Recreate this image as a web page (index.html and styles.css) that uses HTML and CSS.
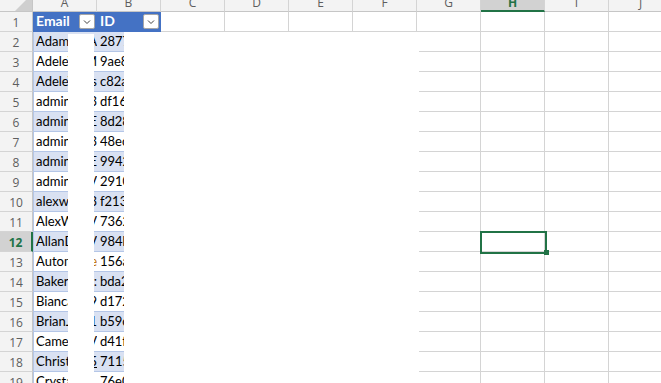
FILE: index.html
```html
<!DOCTYPE html>
<html>
<head>
<meta charset="utf-8">
<link rel="stylesheet" href="styles.css">
</head>
<body>
<div class="sheet">
  <div class="corner"><svg width="32" height="11" viewBox="0 0 32 11"><polygon points="15,11 32,11 32,-6" fill="#CFCFCF"/></svg></div>
  <div class="colhead"><span>A</span></div>
  <div class="colhead"><span>B</span></div>
  <div class="colhead"><span>C</span></div>
  <div class="colhead"><span>D</span></div>
  <div class="colhead"><span>E</span></div>
  <div class="colhead"><span>F</span></div>
  <div class="colhead"><span>G</span></div>
  <div class="colhead sel"><span>H</span></div>
  <div class="colhead"><span>I</span></div>
  <div class="colhead"><span>J</span></div>

  <div class="rowhead">1</div>
  <div class="cell th"><span class="thtext">Email</span><span class="dd"><svg width="14" height="13" viewBox="0 0 14 13"><path d="M4 5.5 L7 8.5 L10 5.5" fill="none" stroke="#404040" stroke-width="1"/></svg></span></div>
  <div class="cell th"><span class="thtext">ID</span><span class="dd"><svg width="14" height="13" viewBox="0 0 14 13"><path d="M4 5.5 L7 8.5 L10 5.5" fill="none" stroke="#404040" stroke-width="1"/></svg></span></div>
  <div class="cell"></div><div class="cell"></div><div class="cell"></div><div class="cell"></div><div class="cell"></div><div class="cell"></div><div class="cell"></div><div class="cell"></div>

  <div class="rowhead">2</div>
  <div class="cell td ca band"><span class="tx">AdamsWilson</span><span class="frag"><span>A</span></span></div>
  <div class="cell td band"><span class="tx">2877c1e4</span></div>
  <div class="cell"></div><div class="cell"></div><div class="cell"></div><div class="cell"></div><div class="cell"></div><div class="cell"></div><div class="cell"></div><div class="cell"></div>

  <div class="rowhead">3</div>
  <div class="cell td ca"><span class="tx">AdeleV</span><span class="frag"><span>M</span></span></div>
  <div class="cell td"><span class="tx">9ae83b10</span></div>
  <div class="cell"></div><div class="cell"></div><div class="cell"></div><div class="cell"></div><div class="cell"></div><div class="cell"></div><div class="cell"></div><div class="cell"></div>

  <div class="rowhead">4</div>
  <div class="cell td ca band"><span class="tx">AdeleVance</span><span class="frag"><span>s</span></span></div>
  <div class="cell td band"><span class="tx">c82a5f09</span></div>
  <div class="cell"></div><div class="cell"></div><div class="cell"></div><div class="cell"></div><div class="cell"></div><div class="cell"></div><div class="cell"></div><div class="cell"></div>

  <div class="rowhead">5</div>
  <div class="cell td ca"><span class="tx">admin</span><span class="frag"><span>3</span></span></div>
  <div class="cell td"><span class="tx">df16a2c7</span></div>
  <div class="cell"></div><div class="cell"></div><div class="cell"></div><div class="cell"></div><div class="cell"></div><div class="cell"></div><div class="cell"></div><div class="cell"></div>

  <div class="rowhead">6</div>
  <div class="cell td ca band"><span class="tx">admin</span><span class="frag"><span>E</span></span></div>
  <div class="cell td band"><span class="tx">8d28e4f1</span></div>
  <div class="cell"></div><div class="cell"></div><div class="cell"></div><div class="cell"></div><div class="cell"></div><div class="cell"></div><div class="cell"></div><div class="cell"></div>

  <div class="rowhead">7</div>
  <div class="cell td ca"><span class="tx">admin</span><span class="frag"><span>3</span></span></div>
  <div class="cell td"><span class="tx">48ec07b2</span></div>
  <div class="cell"></div><div class="cell"></div><div class="cell"></div><div class="cell"></div><div class="cell"></div><div class="cell"></div><div class="cell"></div><div class="cell"></div>

  <div class="rowhead">8</div>
  <div class="cell td ca band"><span class="tx">admin</span><span class="frag"><span>E</span></span></div>
  <div class="cell td band"><span class="tx">99421d6a</span></div>
  <div class="cell"></div><div class="cell"></div><div class="cell"></div><div class="cell"></div><div class="cell"></div><div class="cell"></div><div class="cell"></div><div class="cell"></div>

  <div class="rowhead">9</div>
  <div class="cell td ca"><span class="tx">admin</span><span class="frag"><span>V</span></span></div>
  <div class="cell td"><span class="tx">2910fe38</span></div>
  <div class="cell"></div><div class="cell"></div><div class="cell"></div><div class="cell"></div><div class="cell"></div><div class="cell"></div><div class="cell"></div><div class="cell"></div>

  <div class="rowhead">10</div>
  <div class="cell td ca band"><span class="tx">alexw</span><span class="frag"><span>3</span></span></div>
  <div class="cell td band"><span class="tx">f2135c90</span></div>
  <div class="cell"></div><div class="cell"></div><div class="cell"></div><div class="cell"></div><div class="cell"></div><div class="cell"></div><div class="cell"></div><div class="cell"></div>

  <div class="rowhead">11</div>
  <div class="cell td ca"><span class="tx">AlexW</span><span class="frag"><span>V</span></span></div>
  <div class="cell td"><span class="tx">7362ab14</span></div>
  <div class="cell"></div><div class="cell"></div><div class="cell"></div><div class="cell"></div><div class="cell"></div><div class="cell"></div><div class="cell"></div><div class="cell"></div>

  <div class="rowhead sel">12</div>
  <div class="cell td ca band"><span class="tx">AllanD</span><span class="frag"><span>V</span></span></div>
  <div class="cell td band"><span class="tx">984b3e27</span></div>
  <div class="cell"></div><div class="cell"></div><div class="cell"></div><div class="cell"></div><div class="cell"></div><div class="cell"></div><div class="cell"></div><div class="cell"></div>

  <div class="rowhead">13</div>
  <div class="cell td ca"><span class="tx">Automation</span><span class="frag"><span class="warn">e</span></span></div>
  <div class="cell td"><span class="tx">156a8c4d</span></div>
  <div class="cell"></div><div class="cell"></div><div class="cell"></div><div class="cell"></div><div class="cell"></div><div class="cell"></div><div class="cell"></div><div class="cell"></div>

  <div class="rowhead">14</div>
  <div class="cell td ca band"><span class="tx">BakerSt</span><span class="frag"><span>:</span></span></div>
  <div class="cell td band"><span class="tx">bda29e71</span></div>
  <div class="cell"></div><div class="cell"></div><div class="cell"></div><div class="cell"></div><div class="cell"></div><div class="cell"></div><div class="cell"></div><div class="cell"></div>

  <div class="rowhead">15</div>
  <div class="cell td ca"><span class="tx">BiancaP</span><span class="frag"><span>9</span></span></div>
  <div class="cell td"><span class="tx">d172f0b5</span></div>
  <div class="cell"></div><div class="cell"></div><div class="cell"></div><div class="cell"></div><div class="cell"></div><div class="cell"></div><div class="cell"></div><div class="cell"></div>

  <div class="rowhead">16</div>
  <div class="cell td ca band"><span class="tx">BrianJ</span><span class="frag"><span>1</span></span></div>
  <div class="cell td band"><span class="tx">b59c6d83</span></div>
  <div class="cell"></div><div class="cell"></div><div class="cell"></div><div class="cell"></div><div class="cell"></div><div class="cell"></div><div class="cell"></div><div class="cell"></div>

  <div class="rowhead">17</div>
  <div class="cell td ca"><span class="tx">CameronW</span><span class="frag"><span>V</span></span></div>
  <div class="cell td"><span class="tx">d41f72e9</span></div>
  <div class="cell"></div><div class="cell"></div><div class="cell"></div><div class="cell"></div><div class="cell"></div><div class="cell"></div><div class="cell"></div><div class="cell"></div>

  <div class="rowhead">18</div>
  <div class="cell td ca band"><span class="tx">ChristieC</span><span class="frag"><span class="link">5</span></span></div>
  <div class="cell td band"><span class="tx">711503ca</span></div>
  <div class="cell"></div><div class="cell"></div><div class="cell"></div><div class="cell"></div><div class="cell"></div><div class="cell"></div><div class="cell"></div><div class="cell"></div>

  <div class="rowhead">19</div>
  <div class="cell td ca"><span class="tx">CrystalB</span><span class="frag"><span></span></span></div>
  <div class="cell td"><span class="tx">76e0a1f4</span></div>
  <div class="cell"></div><div class="cell"></div><div class="cell"></div><div class="cell"></div><div class="cell"></div><div class="cell"></div><div class="cell"></div><div class="cell"></div>
</div>
<div class="mask mask-a"></div>
<div class="mask mask-b"></div>
<div class="selection"></div>
<div class="handle"></div>
</body>
</html>
```

FILE: styles.css
```css
html, body {
  margin: 0;
  padding: 0;
  overflow: hidden;
  background: #ffffff;
}
body {
  width: 661px;
  height: 383px;
  position: relative;
  font-family: "Lato", "Liberation Sans", sans-serif;
}
.sheet {
  display: grid;
  grid-template-columns: 33px repeat(10, 64px);
  grid-template-rows: 12px repeat(19, 20px);
}
.corner {
  background: #F3F3F3;
  border-right: 1px solid #C6C6C6;
  border-bottom: 1px solid #C6C6C6;
  box-sizing: border-box;
  overflow: hidden;
}
.corner svg { display: block; }
.colhead {
  background: #F3F3F3;
  border-right: 1px solid #D4D4D4;
  border-bottom: 1px solid #C6C6C6;
  box-sizing: border-box;
  display: flex;
  justify-content: center;
  align-items: flex-start;
  overflow: hidden;
  font-family: "Open Sans", "Liberation Sans", sans-serif;
  font-size: 12px;
  line-height: 12px;
  color: #5E5E5E;
}
.colhead span { margin-top: -3px; }
.colhead.sel {
  background: #D2D2D2;
  border-bottom: 2px solid #217346;
  color: #217346;
  font-weight: bold;
}
.rowhead {
  background: #F3F3F3;
  border-right: 1px solid #C6C6C6;
  border-bottom: 1px solid #D4D4D4;
  box-sizing: border-box;
  display: flex;
  justify-content: center;
  align-items: center;
  padding-top: 1px;
  font-family: "Open Sans", "Liberation Sans", sans-serif;
  font-size: 12px;
  color: #5E5E5E;
}
.rowhead.sel {
  background: #D2D2D2;
  color: #217346;
  font-weight: bold;
  border-right: 2px solid #217346;
}
.cell {
  border-right: 1px solid #D4D4D4;
  border-bottom: 1px solid #D4D4D4;
  box-sizing: border-box;
  overflow: hidden;
  min-width: 0;
}
.th {
  background: #4472C4;
  border-color: #4472C4;
  color: #ffffff;
  font-weight: bold;
  font-size: 14px;
  line-height: 16px;
  display: flex;
  justify-content: space-between;
  align-items: center;
  padding: 0 1px 0 3px;
}
.thtext {
  align-self: flex-end;
  padding-bottom: 2px;
}
.dd {
  width: 16px;
  height: 15px;
  box-sizing: border-box;
  background: #ffffff;
  border: 1px solid #A6A6A6;
  border-radius: 2px;
  display: flex;
}
.dd svg { display: block; }
.td {
  display: flex;
  align-items: flex-end;
  padding: 0 0 2px 3px;
  font-size: 13px;
  line-height: 16px;
  color: #000000;
  border-bottom-color: #B4C6E7;
  white-space: nowrap;
}
.td.ca {
  border-right: none;
  box-shadow: inset 1px 0 #B4C6E7;
}
.band { background: #D9E1F2; }
.tx {
  flex: 1;
  overflow: hidden;
  min-width: 0;
}
.frag {
  flex: none;
  width: 3px;
  display: flex;
  justify-content: flex-end;
  overflow: hidden;
}
.warn { color: #C07000; }
.link { text-decoration: underline; }
.mask {
  position: absolute;
  background: #ffffff;
  bottom: 0;
}
.mask-a { left: 68px; top: 34px; width: 26px; }
.mask-b { left: 124px; top: 32px; width: 295px; }
.selection {
  position: absolute;
  left: 480px;
  top: 231px;
  width: 67px;
  height: 23px;
  box-sizing: border-box;
  border: 2px solid #217346;
}
.handle {
  position: absolute;
  left: 544px;
  top: 250px;
  width: 5px;
  height: 5px;
  background: #217346;
}
```
